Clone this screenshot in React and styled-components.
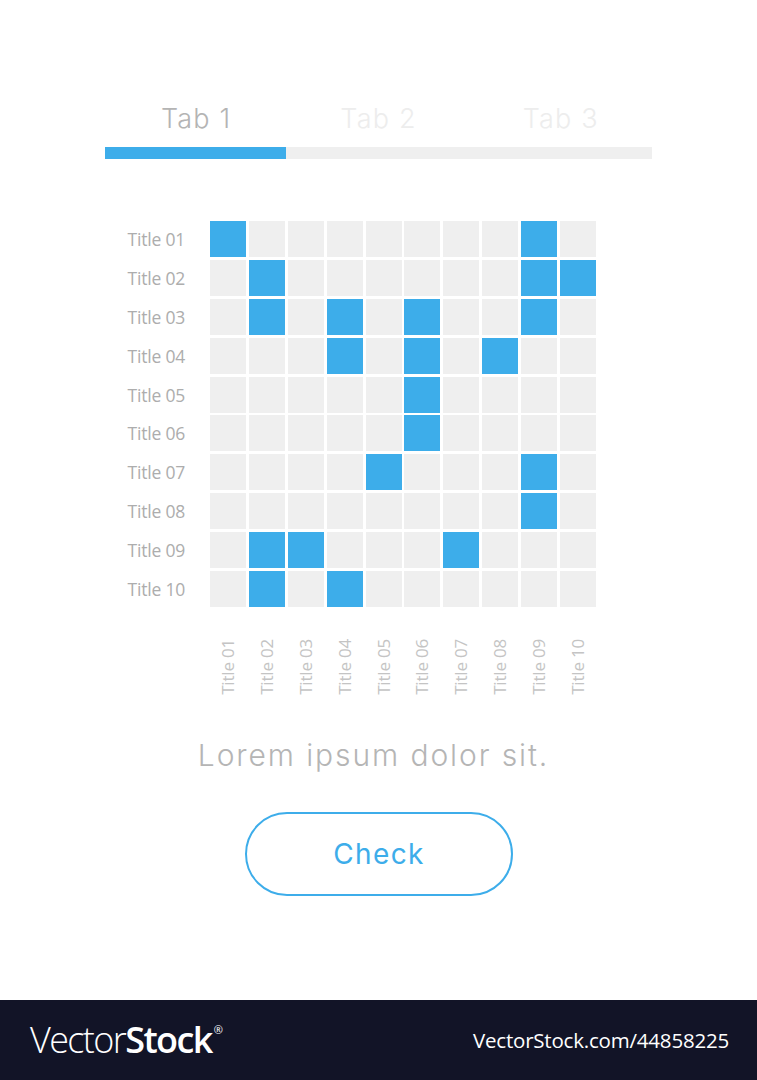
import React from 'react';
import styled, { createGlobalStyle } from 'styled-components';

const GlobalStyle = createGlobalStyle`
  html, body {
    margin: 0;
    padding: 0;
    background: #ffffff;
  }
  body {
    font-family: 'Open Sans', 'Liberation Sans', sans-serif;
  }
`;

const BLUE = '#3dadea';
const CELL = 36;
const GAP = 2.9;

const Page = styled.div`
  width: 757px;
  height: 1080px;
  display: flex;
  flex-direction: column;
  overflow: hidden;
`;

const Content = styled.main`
  flex: 1;
  display: flex;
  flex-direction: column;
  padding: 100px 0 0 105px;
`;

const Tabs = styled.div`
  width: 547px;
  display: flex;
  flex-direction: column;
`;

const TabRow = styled.div`
  display: flex;
`;

const Tab = styled.div`
  flex: 1;
  text-align: center;
  font-family: 'Inter', 'Lato', sans-serif;
  font-weight: 300;
  font-size: 27px;
  letter-spacing: 1.2px;
  line-height: 38px;
  color: ${p => (p.$active ? '#b4b4b4' : '#ededed')};
`;

const Track = styled.div`
  margin-top: 9px;
  height: 12px;
  background: #efefef;
  display: flex;
`;

const Fill = styled.div`
  width: 181px;
  background: ${BLUE};
`;

const Chart = styled.div`
  margin-top: 62px;
  display: grid;
  grid-template-columns: 80px auto;
  column-gap: 25px;
`;

const RowLabels = styled.div`
  display: grid;
  grid-auto-rows: ${CELL}px;
  row-gap: ${GAP}px;
`;

const RowLabel = styled.div`
  font-size: 17.5px;
  letter-spacing: -0.2px;
  color: #adadad;
  text-align: right;
  line-height: ${CELL}px;
`;

const Matrix = styled.div`
  display: grid;
  grid-template-columns: repeat(10, ${CELL}px);
  grid-auto-rows: ${CELL}px;
  gap: ${GAP}px;
`;

const Cell = styled.div`
  background: ${p => (p.$on ? BLUE : '#efefef')};
`;

const ColLabels = styled.div`
  grid-column: 2;
  margin-top: 22px;
  display: grid;
  grid-template-columns: repeat(10, ${CELL}px);
  column-gap: ${GAP}px;
  height: 66px;
  align-items: end;
`;

const ColLabel = styled.div`
  justify-self: center;
  writing-mode: vertical-rl;
  transform: rotate(180deg);
  font-size: 17px;
  letter-spacing: -0.2px;
  line-height: 18px;
  color: #c4c4c4;
`;

const Caption = styled.p`
  margin: 40px 0 0 -105px;
  width: 747px;
  text-align: center;
  font-family: 'Inter', 'Lato', sans-serif;
  font-weight: 300;
  font-size: 30px;
  letter-spacing: 1.9px;
  line-height: 40px;
  color: #b5b5b5;
`;

const CheckButton = styled.button`
  align-self: flex-start;
  margin: 37px 0 0 140px;
  width: 268px;
  height: 84px;
  border: 2.5px solid ${BLUE};
  border-radius: 42px;
  background: #fff;
  color: ${BLUE};
  font-family: 'Inter', 'Lato', sans-serif;
  font-weight: 400;
  font-size: 28px;
  letter-spacing: 1.4px;
  cursor: pointer;
`;

const Footer = styled.footer`
  height: 80px;
  background: #121427;
  display: flex;
  align-items: center;
  justify-content: space-between;
  padding: 0 28px 0 30px;
  color: #fff;
`;

const Logo = styled.div`
  font-family: 'Open Sans', sans-serif;
  font-size: 36px;
  letter-spacing: -1.6px;
  display: flex;
  align-items: flex-start;
  line-height: 1;
`;

const LogoLight = styled.span`
  font-weight: 300;
`;

const LogoBold = styled.span`
  font-weight: 600;
`;

const Reg = styled.sup`
  font-size: 11px;
  letter-spacing: 0;
  margin-left: 2px;
  margin-top: 2px;
`;

const Credit = styled.div`
  font-family: 'Open Sans', sans-serif;
  font-size: 20.5px;
  letter-spacing: -0.2px;
`;

const titles = Array.from({ length: 10 }, (_, i) => `Title ${String(i + 1).padStart(2, '0')}`);

const active = [
  [1, 9],
  [2, 9, 10],
  [2, 4, 6, 9],
  [4, 6, 8],
  [6],
  [6],
  [5, 9],
  [9],
  [2, 3, 7],
  [2, 4],
];

export default function App() {
  return (
    <Page>
      <GlobalStyle />
      <Content>
        <Tabs>
          <TabRow>
            <Tab $active>Tab 1</Tab>
            <Tab>Tab 2</Tab>
            <Tab>Tab 3</Tab>
          </TabRow>
          <Track>
            <Fill />
          </Track>
        </Tabs>

        <Chart>
          <RowLabels>
            {titles.map(t => (
              <RowLabel key={t}>{t}</RowLabel>
            ))}
          </RowLabels>
          <Matrix>
            {active.map((row, r) =>
              titles.map((_, c) => (
                <Cell key={`${r}-${c}`} $on={row.includes(c + 1)} />
              )),
            )}
          </Matrix>
          <ColLabels>
            {titles.map(t => (
              <ColLabel key={t}>{t}</ColLabel>
            ))}
          </ColLabels>
        </Chart>

        <Caption>Lorem ipsum dolor sit.</Caption>
        <CheckButton>Check</CheckButton>
      </Content>
      <Footer>
        <Logo>
          <LogoLight>Vector</LogoLight>
          <LogoBold>Stock</LogoBold>
          <Reg>®</Reg>
        </Logo>
        <Credit>VectorStock.com/44858225</Credit>
      </Footer>
    </Page>
  );
}
